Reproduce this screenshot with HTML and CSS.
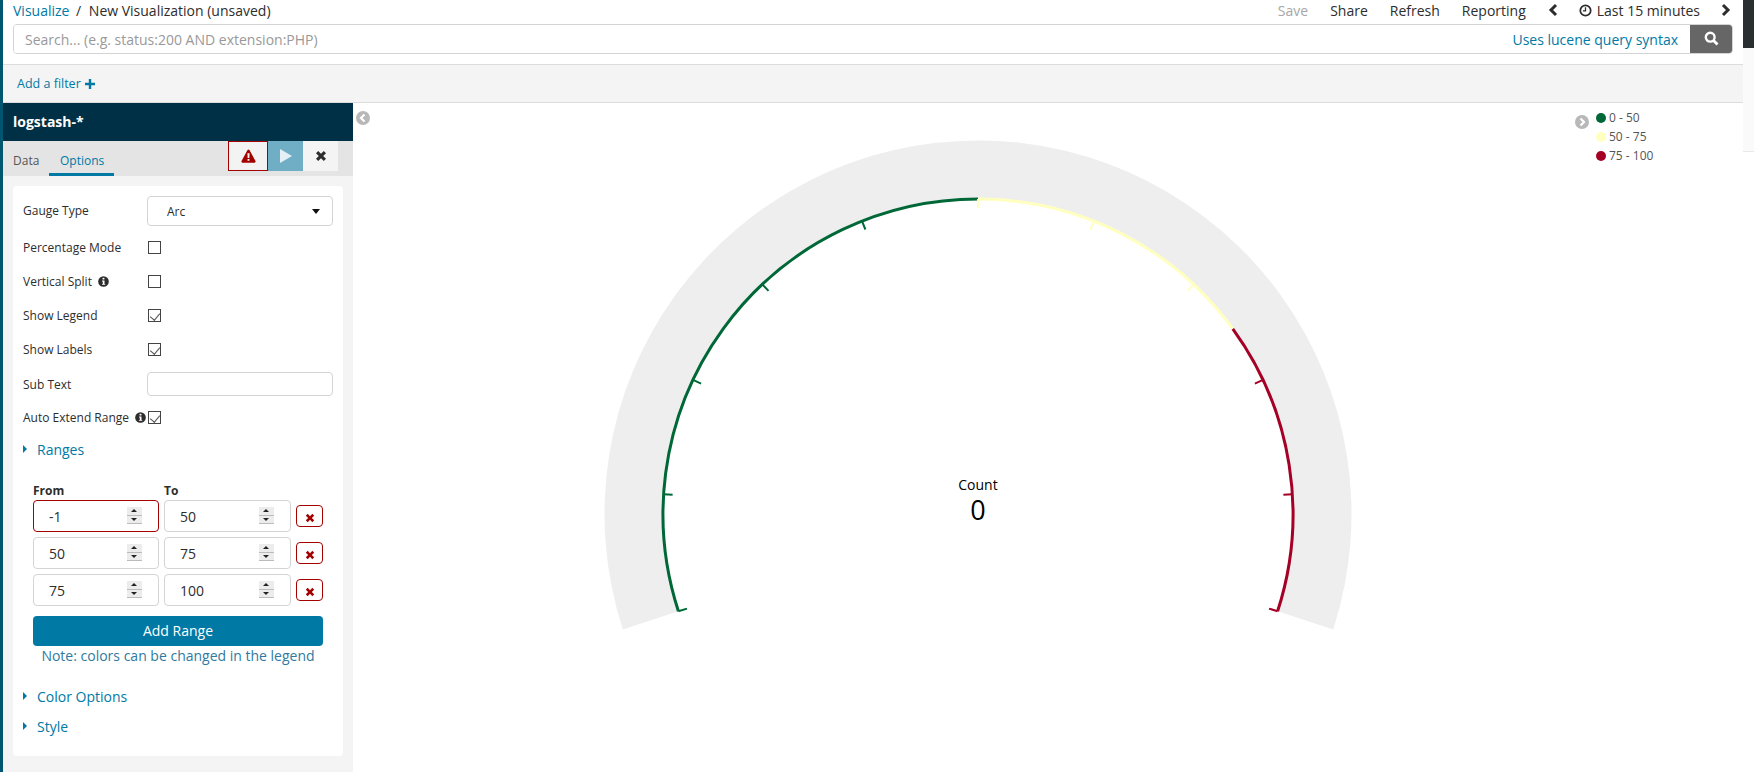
FILE: index.html
```html
<!DOCTYPE html>
<html lang="en">
<head>
  <meta charset="UTF-8">
  <title>New Visualization - Kibana</title>
  <link rel="stylesheet" href="styles.css">
</head>
<body>
  <svg class="defs" width="0" height="0">
    <defs>
      <symbol id="i-info" viewBox="0 0 12 12">
        <circle cx="6" cy="6" r="5.8" fill="currentColor"/>
        <rect x="5" y="2" width="2" height="1.8" fill="#fff"/>
        <path d="M4.4 5h2.7v3.6h.8v1H4.3v-1h.9V6h-.8z" fill="#fff"/>
      </symbol>
      <symbol id="i-caret" viewBox="0 0 6 10">
        <path d="M0 1l4 4-4 4z" fill="currentColor"/>
      </symbol>
      <symbol id="i-times" viewBox="0 0 12 12">
        <path d="M1 3.2L3.2 1 6 3.8 8.8 1 11 3.2 8.2 6 11 8.8 8.8 11 6 8.2 3.2 11 1 8.8 3.8 6z" fill="currentColor"/>
      </symbol>
      <symbol id="i-chev-l" viewBox="0 0 14 14">
        <path d="M10 2L5 7l5 5" fill="none" stroke="currentColor" stroke-width="3"/>
      </symbol>
      <symbol id="i-chev-r" viewBox="0 0 14 14">
        <path d="M4 2l5 5-5 5" fill="none" stroke="currentColor" stroke-width="3"/>
      </symbol>
    </defs>
  </svg>

  <div class="strip"></div>

  <div class="content">
    <div class="topnav">
      <div class="crumbs">
        <a class="link">Visualize</a>
        <span class="slash">/</span>
        <span>New Visualization (unsaved)</span>
      </div>
      <div class="menu">
        <span class="menu-save">Save</span>
        <span class="menu-share">Share</span>
        <span class="menu-refresh">Refresh</span>
        <span class="menu-report">Reporting</span>
        <svg class="chev chev-prev"><use href="#i-chev-l"/></svg>
        <svg class="clock" viewBox="0 0 12 12">
          <circle cx="6" cy="6" r="4.8" fill="none" stroke="currentColor" stroke-width="1.6"/>
          <path d="M6 3v3.4H3.6" fill="none" stroke="currentColor" stroke-width="1.2"/>
        </svg>
        <span class="menu-time">Last 15 minutes</span>
        <svg class="chev chev-next"><use href="#i-chev-r"/></svg>
      </div>
    </div>

    <div class="searchrow">
      <div class="search">
        <input type="text" placeholder="Search... (e.g. status:200 AND extension:PHP)">
        <a class="link syntax">Uses lucene query syntax</a>
        <button class="search-btn">
          <svg viewBox="0 0 15 15" width="15" height="15">
            <circle cx="6.2" cy="6.2" r="4.4" fill="none" stroke="#fff" stroke-width="2.4"/>
            <path d="M9.5 9.5l4 4" stroke="#fff" stroke-width="2.8"/>
          </svg>
        </button>
      </div>
    </div>

    <div class="filterbar">
      <a class="link">Add a filter</a>
      <svg class="plus" viewBox="0 0 10 10"><path d="M3.8 0h2.4v3.8H10v2.4H6.2V10H3.8V6.2H0V3.8h3.8z" fill="#0079a5"/></svg>
    </div>

    <div class="main">
      <div class="sidebar">
        <div class="index-title">logstash-*</div>
        <div class="tabs">
          <span class="tab">Data</span>
          <span class="tab tab-active">Options</span>
          <div class="actions">
            <button class="act act-warn">
              <svg viewBox="0 0 14 13" width="15" height="14">
                <path d="M7 .5c.4 0 .7.2.9.5l5.6 10.2c.4.7-.1 1.5-.9 1.5H1.4c-.8 0-1.3-.8-.9-1.5L6.1 1c.2-.3.5-.5.9-.5z" fill="#a30000"/>
                <path d="M6 4h2l-.2 4.3H6.2zM6.1 9.3h1.8V11H6.1z" fill="#f3f3f3"/>
              </svg>
            </button>
            <button class="act act-play">
              <svg viewBox="0 0 12 14" width="12" height="14"><path d="M0 0l12 7-12 7z" fill="#e4f0f5"/></svg>
            </button>
            <button class="act act-close"><svg width="12" height="12"><use href="#i-times"/></svg></button>
          </div>
        </div>

        <div class="panel">
          <div class="row row-first">
            <label>Gauge Type</label>
            <div class="select">
              <span>Arc</span>
              <i class="caret-down"></i>
            </div>
          </div>
          <div class="row">
            <label>Percentage Mode</label>
            <input type="checkbox">
          </div>
          <div class="row">
            <label>Vertical Split <svg class="info"><use href="#i-info"/></svg></label>
            <input type="checkbox">
          </div>
          <div class="row">
            <label>Show Legend</label>
            <input type="checkbox" checked>
          </div>
          <div class="row">
            <label>Show Labels</label>
            <input type="checkbox" checked>
          </div>
          <div class="row row-sub">
            <label>Sub Text</label>
            <input class="subtext" type="text">
          </div>
          <div class="row">
            <label>Auto Extend Range <svg class="info"><use href="#i-info"/></svg></label>
            <input type="checkbox" checked>
          </div>

          <div class="section"><svg class="caret"><use href="#i-caret"/></svg>Ranges</div>

          <div class="range-head">
            <span>From</span>
            <span>To</span>
          </div>
          <div class="range">
            <div class="num num-error"><input type="text" value="-1"><span class="spin"><i></i><i></i></span></div>
            <div class="num num-to"><input type="text" value="50"><span class="spin"><i></i><i></i></span></div>
            <button class="del"><svg width="10" height="10"><use href="#i-times"/></svg></button>
          </div>
          <div class="range">
            <div class="num"><input type="text" value="50"><span class="spin"><i></i><i></i></span></div>
            <div class="num num-to"><input type="text" value="75"><span class="spin"><i></i><i></i></span></div>
            <button class="del"><svg width="10" height="10"><use href="#i-times"/></svg></button>
          </div>
          <div class="range">
            <div class="num"><input type="text" value="75"><span class="spin"><i></i><i></i></span></div>
            <div class="num num-to"><input type="text" value="100"><span class="spin"><i></i><i></i></span></div>
            <button class="del"><svg width="10" height="10"><use href="#i-times"/></svg></button>
          </div>
          <button class="add-range">Add Range</button>
          <div class="note">Note: colors can be changed in the legend</div>

          <div class="section section-gap"><svg class="caret"><use href="#i-caret"/></svg>Color Options</div>
          <div class="section"><svg class="caret"><use href="#i-caret"/></svg>Style</div>
        </div>
      </div>

      <div class="vis">
        <svg class="toggle" viewBox="0 0 14 14">
          <circle cx="7" cy="7" r="7" fill="#b8b8b8"/>
          <path d="M8.5 3.5L5 7l3.5 3.5" fill="none" stroke="#fff" stroke-width="2.2"/>
        </svg>

        <svg class="gauge" viewBox="353 103 1390 669" width="1390" height="669">
          <path class="band" d="M622.8 629.4A373.5 373.5 0 1 1 1333.2 629.4L1278.5 611.6A316 316 0 1 0 677.5 611.6Z"/>
          <g class="seg seg-green">
            <path d="M678.4 611.3A315 315 0 0 1 978 199"/>
            <path class="tick" d="M678.4 611.3L687 608.6M663.6 494.2L672.6 494.8M693 379.9L701.1 383.7M762.4 284.4L768.5 290.9M862 221.1L865.4 229.5"/>
          </g>
          <g class="seg seg-yellow">
            <path d="M978 199A315 315 0 0 1 1232.8 328.8"/>
            <path class="tick" d="M978 199V208M1094 221.1L1090.6 229.5M1193.6 284.4L1187.5 290.9"/>
          </g>
          <g class="seg seg-red">
            <path d="M1232.8 328.8A315 315 0 0 1 1277.6 611.3"/>
            <path class="tick" d="M1263 379.9L1254.9 383.7M1292.4 494.2L1283.4 494.8M1277.6 611.3L1269 608.6"/>
          </g>
          <text class="gauge-label" x="978" y="490">Count</text>
          <text class="gauge-value" x="978" y="520">0</text>
        </svg>

        <div class="legend">
          <svg class="toggle-right" viewBox="0 0 14 14">
            <circle cx="7" cy="7" r="7" fill="#b8b8b8"/>
            <path d="M5.5 3.5L9 7l-3.5 3.5" fill="none" stroke="#fff" stroke-width="2.2"/>
          </svg>
          <ul>
            <li><i class="dot dot-green"></i>0 - 50</li>
            <li><i class="dot dot-yellow"></i>50 - 75</li>
            <li><i class="dot dot-red"></i>75 - 100</li>
          </ul>
        </div>
      </div>
    </div>
  </div>

  <div class="rail">
    <div class="rail-dark"></div>
    <div class="rail-light"></div>
  </div>
</body>
</html>
```

FILE: styles.css
```css
* {
  box-sizing: border-box;
}
html, body {
  height: 100%;
}
body {
  margin: 0;
  display: flex;
  overflow: hidden;
  font-family: "Open Sans", "Liberation Sans", sans-serif;
  font-size: 14px;
  color: #2d2d2d;
  background: #fff;
}
input, button {
  font-family: inherit;
}
.defs {
  position: absolute;
}
.link {
  color: #0079a5;
}
.strip {
  width: 3px;
  background: #005571;
}
.content {
  flex: 1;
  display: flex;
  flex-direction: column;
  min-width: 0;
}
.rail {
  width: 11px;
}
.rail-dark {
  height: 48px;
  background: #292e31;
}
.rail-light {
  height: 104px;
  background: #fafafa;
  border-bottom: 1px solid #e8e8e8;
}

/* top bar */
.topnav {
  height: 24px;
  display: flex;
  align-items: center;
  justify-content: space-between;
  padding: 0 10px 4px 10px;
}
.crumbs .slash {
  margin: 0 4px 0 3px;
}
.menu {
  display: flex;
  align-items: center;
}
.menu-save {
  color: #a8a8a8;
  margin-right: 22px;
}
.menu-share {
  margin-right: 22px;
}
.menu-refresh {
  margin-right: 22px;
}
.menu-report {
  margin-right: 20px;
}
.chev {
  width: 14px;
  height: 14px;
}
.chev-prev {
  margin-right: 19px;
}
.clock {
  width: 13px;
  height: 13px;
  margin-right: 5px;
}
.menu-time {
  margin-right: 19px;
}

.searchrow {
  height: 41px;
  padding: 0 10px 0 10px;
  border-bottom: 1px solid #dcdcdc;
}
.search {
  height: 30px;
  display: flex;
  align-items: center;
  border: 1px solid #d4d4d4;
  border-radius: 4px;
  overflow: hidden;
}
.search input {
  flex: 1;
  height: 100%;
  border: none;
  outline: none;
  padding: 0 0 0 11px;
  font-size: 14px;
  color: #2d2d2d;
}
.search input::placeholder {
  color: #999;
}
.syntax {
  margin-right: 12px;
}
.search-btn {
  width: 42px;
  height: 30px;
  border: none;
  padding: 2px 0 0;
  background: #666;
}

.filterbar {
  height: 38px;
  display: flex;
  align-items: center;
  padding-left: 14px;
  background: #f4f4f4;
  border-bottom: 1px solid #dcdcdc;
  font-size: 12.5px;
}
.plus {
  width: 10px;
  height: 10px;
  margin-left: 4px;
}

/* sidebar */
.main {
  flex: 1;
  display: flex;
  min-height: 0;
}
.sidebar {
  width: 350px;
  background: #f4f4f4;
}
.index-title {
  height: 38px;
  line-height: 38px;
  padding-left: 10px;
  background: #003045;
  color: #fff;
  font-weight: 700;
}
.tabs {
  height: 35px;
  display: flex;
  background: #e4e4e4;
  font-size: 12px;
}
.tab {
  height: 35px;
  line-height: 40px;
  color: #555;
  padding-left: 10px;
  width: 46px;
}
.tab-active {
  width: 65px;
  padding-left: 11px;
  color: #0079a5;
  border-bottom: 3px solid #0079a5;
}
.actions {
  display: flex;
  margin-left: 114px;
}
.act {
  width: 35px;
  height: 30px;
  border: none;
  padding: 0;
  display: flex;
  align-items: center;
  justify-content: center;
  background: #f4f4f4;
  color: #2d2d2d;
}
.act-warn {
  width: 40px;
  background: #f3f3f3;
  border: 1px solid #a30000;
}
.act-play {
  background: #70aec6;
}
.panel {
  margin: 10px;
  padding: 10px 10px 15px;
  background: #fff;
  border-radius: 4px;
  font-size: 12px;
}
.row {
  height: 34px;
  display: flex;
  align-items: center;
}
.row-first {
  align-items: flex-start;
}
.row-sub {
  padding-top: 2px;
}
.row label {
  width: 124px;
  display: flex;
  align-items: center;
}
.row-first label {
  line-height: 30px;
}
.info {
  width: 11px;
  height: 11px;
  margin-left: 6px;
  color: #2d2d2d;
}
.select {
  width: 186px;
  height: 30px;
  display: flex;
  align-items: center;
  justify-content: space-between;
  padding: 0 12px 0 19px;
  border: 1px solid #d4d4d4;
  border-radius: 4px;
}
.caret-down {
  border-left: 4px solid transparent;
  border-right: 4px solid transparent;
  border-top: 5px solid #111;
}
.row input[type="checkbox"] {
  appearance: none;
  position: relative;
  width: 13px;
  height: 13px;
  margin: 0 0 0 1px;
  border: 1px solid #444;
  background: #fff;
}
.row input[type="checkbox"]:checked::after {
  content: "";
  position: absolute;
  left: 3px;
  top: 1px;
  width: 5px;
  height: 8px;
  border-right: 1px solid #555;
  border-bottom: 1px solid #555;
  transform: rotate(40deg);
}
.subtext {
  width: 186px;
  height: 24px;
  border: 1px solid #d4d4d4;
  border-radius: 4px;
  outline: none;
}
.section {
  height: 30px;
  display: flex;
  align-items: center;
  font-size: 14px;
  color: #0079a5;
}
.section-gap {
  margin-top: 15px;
}
.caret {
  width: 6px;
  height: 10px;
  margin-right: 8px;
  color: #0079a5;
}

/* ranges */
.range-head {
  display: flex;
  height: 18px;
  margin-top: 18px;
  padding-left: 10px;
  font-weight: 700;
  line-height: 18px;
}
.range-head span {
  width: 131px;
}
.range {
  display: flex;
  align-items: center;
  gap: 5px;
  margin: 0 0 5px 10px;
}
.num {
  position: relative;
  width: 126px;
  height: 32px;
}
.num-to {
  width: 127px;
}
.num input {
  width: 100%;
  height: 100%;
  padding: 0 0 0 15px;
  border: 1px solid #d4d4d4;
  border-radius: 4px;
  outline: none;
  font-size: 14px;
  color: #2d2d2d;
}
.num-error input {
  border-color: #a30000;
}
.spin {
  position: absolute;
  right: 17px;
  top: 7px;
  width: 15px;
  height: 17px;
  display: flex;
  flex-direction: column;
  gap: 1px;
  border-bottom: 1px solid #bbb;
  background: #bbb;
}
.spin i {
  flex: 1;
  position: relative;
  background: #ececec;
}
.spin i::after {
  content: "";
  position: absolute;
  left: 4px;
  top: 2px;
  border-left: 3px solid transparent;
  border-right: 3px solid transparent;
  border-bottom: 3px solid #222;
}
.spin i:last-child::after {
  border-bottom: none;
  border-top: 3px solid #222;
}
.del {
  width: 27px;
  height: 22px;
  padding: 3px 0 0;
  border: 1px solid #a30000;
  border-radius: 4px;
  background: #fff;
  color: #a30000;
}
.add-range {
  display: block;
  width: 290px;
  height: 30px;
  margin: 10px 0 0 10px;
  padding: 0 0 2px;
  border: none;
  border-radius: 4px;
  background: #0079a5;
  color: #fff;
  font-size: 14px;
}
.note {
  height: 20px;
  margin-left: 10px;
  width: 290px;
  line-height: 20px;
  text-align: center;
  font-size: 14px;
  color: #2f7a9e;
  white-space: nowrap;
}

/* gauge */
.vis {
  flex: 1;
  position: relative;
  min-width: 0;
}
.gauge {
  display: block;
}
.band {
  fill: #eee;
}
.seg path {
  fill: none;
  stroke-width: 3;
}
.seg .tick {
  stroke-width: 2;
}
.seg-green path {
  stroke: #006837;
}
.seg-yellow path {
  stroke: #ffffbf;
}
.seg-red path {
  stroke: #a50026;
}
.gauge-label {
  text-anchor: middle;
  font-size: 14px;
  fill: #000;
}
.gauge-value {
  text-anchor: middle;
  font-size: 27px;
  fill: #000;
}
.toggle {
  position: absolute;
  left: 3px;
  top: 8px;
  width: 14px;
  height: 14px;
}
.legend {
  position: absolute;
  left: 1222px;
  top: 5px;
  display: flex;
  font-size: 12px;
  color: #555;
}
.toggle-right {
  width: 14px;
  height: 14px;
  margin: 7px 7px 0 0;
}
.legend ul {
  margin: 0;
  padding: 0;
  list-style: none;
}
.legend li {
  height: 19px;
  display: flex;
  align-items: center;
}
.dot {
  width: 10px;
  height: 10px;
  margin-right: 3px;
  border-radius: 50%;
}
.dot-green {
  background: #006837;
}
.dot-yellow {
  background: #ffffbf;
}
.dot-red {
  background: #a50026;
}
```
